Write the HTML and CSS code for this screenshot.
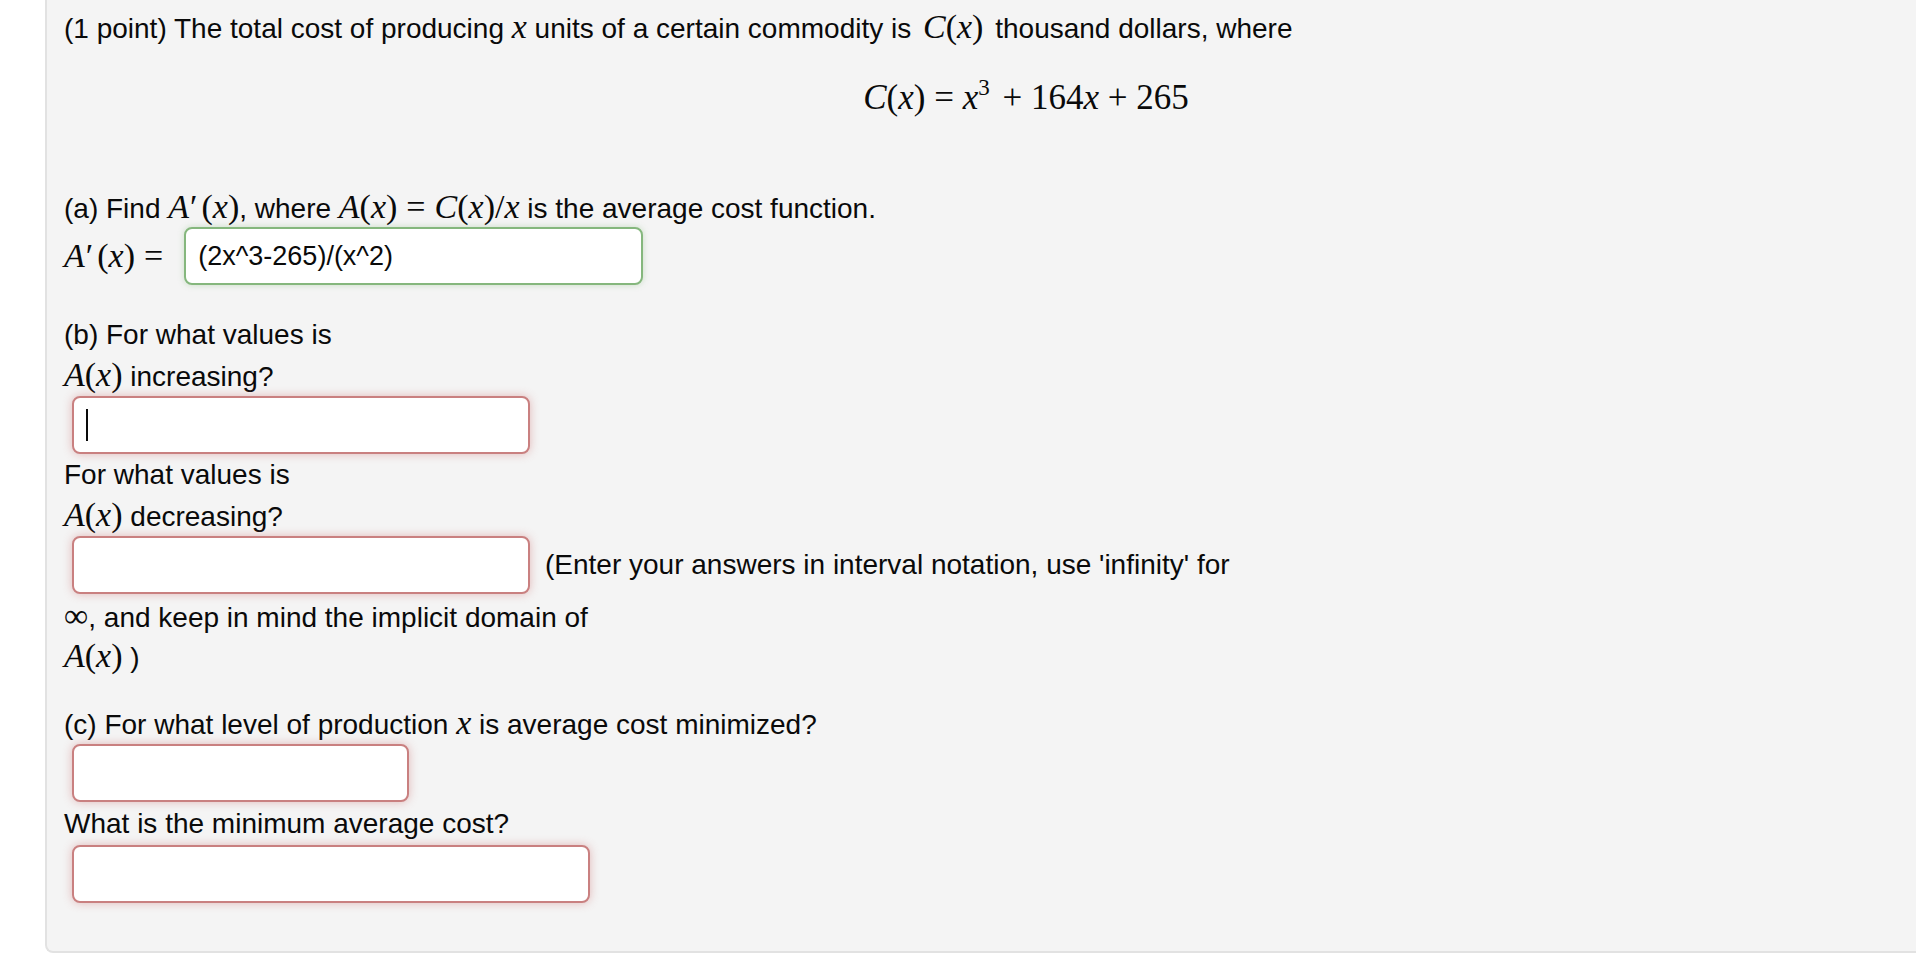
FILE: index.html
```html
<!DOCTYPE html>
<html>
<head>
<meta charset="utf-8">
<title>Problem</title>
<link rel="stylesheet" href="styles.css">
</head>
<body>
<div class="well">
  <div class="line first">(1 point) The total cost of producing <span class="m"><i>x</i></span> units of a certain commodity is <span class="m sp"><i>C</i>(<i>x</i>)</span> thousand dollars, where</div>
  <div class="display"><span class="m"><i>C</i>(<i>x</i>) = <i>x</i><sup>3</sup> + 164<i>x</i> + 265</span></div>

  <div class="line part-a">(a) Find <span class="m"><i>A</i><span class="pr">′</span>(<i>x</i>)</span>, where <span class="m"><i>A</i>(<i>x</i>)<span class="op">=</span><i>C</i>(<i>x</i>)/<i>x</i></span> is the average cost function.</div>
  <div class="row">
    <span class="m lbl"><i>A</i><span class="pr">′</span>(<i>x</i>)<span class="op">=</span></span>
    <input class="ans ok w-a" type="text" value="(2x^3-265)/(x^2)">
  </div>

  <div class="line part-b">(b) For what values is</div>
  <div class="line"><span class="m"><i>A</i>(<i>x</i>)</span> increasing?</div>
  <div class="row box-row">
    <span class="caret-wrap"><input class="ans bad w-b" type="text" value=""></span>
  </div>
  <div class="line tight">For what values is</div>
  <div class="line"><span class="m"><i>A</i>(<i>x</i>)</span> decreasing?</div>
  <div class="row box-row">
    <input class="ans bad w-b" type="text" value="">
    <span class="note">(Enter your answers in interval notation, use 'infinity' for</span>
  </div>
  <div class="line after-box"><span class="m">∞</span>, and keep in mind the implicit domain of</div>
  <div class="line"><span class="m"><i>A</i>(<i>x</i>)</span> )</div>

  <div class="line part-c">(c) For what level of production <span class="m"><i>x</i></span> is average cost minimized?</div>
  <div class="row box-row">
    <input class="ans bad w-c" type="text" value="">
  </div>
  <div class="line after-box2">What is the minimum average cost?</div>
  <div class="row box-row last">
    <input class="ans bad w-d" type="text" value="">
  </div>
</div>
</body>
</html>
```

FILE: styles.css
```css
html, body {
  margin: 0;
  padding: 0;
  overflow: hidden;
  background: #ffffff;
}

body {
  font-family: "Liberation Sans", Arial, sans-serif;
  font-size: 28px;
  line-height: 40px;
  color: #0a0a0a;
}

.well {
  box-sizing: border-box;
  margin-left: 45px;
  width: 1960px;
  background: #f4f4f4;
  border-left: 2px solid #e2e2e2;
  border-bottom: 2px solid #e2e2e2;
  border-bottom-left-radius: 8px;
  padding: 7px 17px 48px 17px;
}

.line {
  height: 40px;
  white-space: nowrap;
}

.m {
  font-family: "Liberation Serif", "Times New Roman", serif;
  font-size: 34px;
}

.m i {
  font-style: italic;
}

.sp {
  margin: 0 4px;
}

.pr {
  margin-left: 1px;
  margin-right: 4px;
}

.op {
  margin: 0 9px;
}

.m sup {
  font-size: 23px;
  line-height: 0;
  vertical-align: 14px;
  margin-left: 0;
  margin-right: 4px;
}

.display {
  margin-top: 31px;
  height: 40px;
  text-align: center;
}

.display .m {
  font-size: 35px;
}

.part-a { margin-top: 69px; }
.part-b { margin-top: 30px; }
.part-c { margin-top: 27px; }
.tight { margin-top: 1px; }
.after-box { margin-top: 2px; }
.after-box2 { margin-top: 2px; }

.row {
  display: flex;
  align-items: center;
  height: 58px;
  white-space: nowrap;
}

.box-row {
  margin-top: 1px;
}

.lbl {
  margin-right: 21px;
}

.lbl .op {
  margin-right: 0;
}

.ans {
  box-sizing: border-box;
  height: 58px;
  margin: 0;
  padding: 0 12px;
  border-radius: 8px;
  background: #ffffff;
  font-family: "Liberation Sans", Arial, sans-serif;
  font-size: 27px;
  color: #0a0a0a;
  outline: none;
}

.ok {
  border: 2px solid #85b77d;
  box-shadow: 0 0 6px rgba(120, 180, 110, 0.35);
}

.bad {
  border: 2px solid #c98080;
  box-shadow: 0 0 10px rgba(205, 110, 110, 0.45);
}

.w-a { width: 459px; }
.w-b { width: 458px; margin-left: 8px; }
.w-c { width: 337px; margin-left: 8px; }
.w-d { width: 518px; margin-left: 8px; }

.note {
  margin-left: 15px;
}

.caret-wrap {
  position: relative;
  display: inline-block;
}

.caret-wrap::after {
  content: "";
  position: absolute;
  left: 22px;
  top: 13px;
  width: 2px;
  height: 32px;
  background: #0a0a0a;
}
```
